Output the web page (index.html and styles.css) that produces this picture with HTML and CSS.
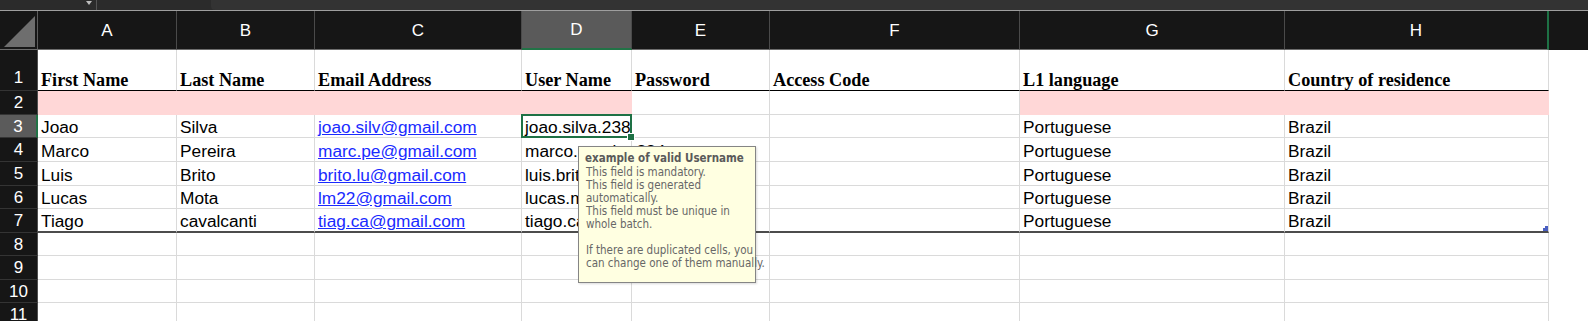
FILE: index.html
```html
<!DOCTYPE html>
<html lang="en">
<head>
    <meta charset="UTF-8">
    <title>Users sheet</title>
    <link rel="stylesheet" href="styles.css">
</head>
<body>
    <div class="topbar">
        <div class="namebox"><span class="caret"></span></div>
        <div class="formula"></div>
    </div>

    <div class="sheet">
        <!-- column letters -->
        <div class="row colhead">
            <div class="corner"><div class="tri"></div></div>
            <div class="ch">A</div>
            <div class="ch">B</div>
            <div class="ch">C</div>
            <div class="ch active">D</div>
            <div class="ch">E</div>
            <div class="ch">F</div>
            <div class="ch">G</div>
            <div class="ch last">H</div>
        </div>

        <div class="row titles">
            <div class="rh">1</div>
            <div class="cell">First Name</div>
            <div class="cell">Last Name</div>
            <div class="cell">Email Address</div>
            <div class="cell">User Name</div>
            <div class="cell">Password</div>
            <div class="cell">Access Code</div>
            <div class="cell">L1 language</div>
            <div class="cell">Country of residence</div>
        </div>

        <div class="row r2">
            <div class="rh">2</div>
            <div class="cell pink"></div>
            <div class="cell pink"></div>
            <div class="cell pink"></div>
            <div class="cell pink"></div>
            <div class="cell"></div>
            <div class="cell"></div>
            <div class="cell pink"></div>
            <div class="cell pink"></div>
        </div>

        <div class="row h23">
            <div class="rh active">3</div>
            <div class="cell">Joao</div>
            <div class="cell">Silva</div>
            <div class="cell"><a href="#">joao.silv@gmail.com</a></div>
            <div class="cell selected">joao.silva.238</div>
            <div class="cell"></div>
            <div class="cell"></div>
            <div class="cell">Portuguese</div>
            <div class="cell">Brazil</div>
        </div>

        <div class="row h24">
            <div class="rh">4</div>
            <div class="cell">Marco</div>
            <div class="cell">Pereira</div>
            <div class="cell"><a href="#">marc.pe@gmail.com</a></div>
            <div class="cell spill">marco.pereira.234</div>
            <div class="cell"></div>
            <div class="cell"></div>
            <div class="cell">Portuguese</div>
            <div class="cell">Brazil</div>
        </div>

        <div class="row h24">
            <div class="rh">5</div>
            <div class="cell">Luis</div>
            <div class="cell">Brito</div>
            <div class="cell"><a href="#">brito.lu@gmail.com</a></div>
            <div class="cell spill">luis.brito.412</div>
            <div class="cell"></div>
            <div class="cell"></div>
            <div class="cell">Portuguese</div>
            <div class="cell">Brazil</div>
        </div>

        <div class="row h23">
            <div class="rh">6</div>
            <div class="cell">Lucas</div>
            <div class="cell">Mota</div>
            <div class="cell"><a href="#">lm22@gmail.com</a></div>
            <div class="cell spill">lucas.mota.587</div>
            <div class="cell"></div>
            <div class="cell"></div>
            <div class="cell">Portuguese</div>
            <div class="cell">Brazil</div>
        </div>

        <div class="row h24 endrow">
            <div class="rh">7</div>
            <div class="cell">Tiago</div>
            <div class="cell">cavalcanti</div>
            <div class="cell"><a href="#">tiag.ca@gmail.com</a></div>
            <div class="cell spill">tiago.cavalcanti.190</div>
            <div class="cell"></div>
            <div class="cell"></div>
            <div class="cell">Portuguese</div>
            <div class="cell marker">Brazil</div>
        </div>

        <div class="row h23">
            <div class="rh">8</div>
            <div class="cell"></div><div class="cell"></div><div class="cell"></div><div class="cell"></div>
            <div class="cell"></div><div class="cell"></div><div class="cell"></div><div class="cell"></div>
        </div>
        <div class="row h24">
            <div class="rh">9</div>
            <div class="cell"></div><div class="cell"></div><div class="cell"></div><div class="cell"></div>
            <div class="cell"></div><div class="cell"></div><div class="cell"></div><div class="cell"></div>
        </div>
        <div class="row h23">
            <div class="rh">10</div>
            <div class="cell"></div><div class="cell"></div><div class="cell"></div><div class="cell"></div>
            <div class="cell"></div><div class="cell"></div><div class="cell"></div><div class="cell"></div>
        </div>
        <div class="row h24">
            <div class="rh">11</div>
            <div class="cell"></div><div class="cell"></div><div class="cell"></div><div class="cell"></div>
            <div class="cell"></div><div class="cell"></div><div class="cell"></div><div class="cell"></div>
        </div>

        <!-- cell comment on D3 -->
        <div class="tip">
            <div class="tip-title">example of valid Username</div>
            <div class="tip-body">This field is mandatory.<br>This field is generated<br>automatically.<br>This field must be unique in<br>whole batch.<br><br>If there are duplicated cells, you<br>can change one of them manually.</div>
        </div>
    </div>
</body>
</html>
```

FILE: styles.css
```css
body {
    margin: 0;
    padding: 0;
    background: #ffffff;
    font-family: 'Liberation Sans', Arial, sans-serif;
    overflow: hidden;
}

/* toolbar strip cut off at the top */
.topbar {
    height: 10px;
    background: #2b2b2b;
    border-bottom: 1px solid #9e9e9e;
    display: flex;
}

.namebox {
    width: 97px;
    border-right: 1px solid #555;
    display: flex;
    justify-content: flex-end;
    align-items: flex-start;
    padding: 1px 4px 0 0;
    box-sizing: border-box;
}

.caret {
    width: 0;
    height: 0;
    border-left: 3px solid transparent;
    border-right: 3px solid transparent;
    border-top: 4px solid #bdbdbd;
}

.formula {
    flex-grow: 1;
    margin-left: 114px;
    background: #333333;
    border-radius: 0 0 0 4px;
}

.sheet {
    position: relative;
}

.row {
    display: grid;
    grid-template-columns: 38px 139px 138px 207px 110px 138px 250px 265px 264px;
}

.h23 { height: 23px; }
.h24 { height: 24px; }

/* column letters */
.colhead {
    height: 39px;
    background: #161616;
}

.corner {
    background: #161616;
    border-right: 1px solid #5c5c5c;
    border-bottom: 1px solid #6c6c6c;
    box-sizing: border-box;
    display: flex;
    align-items: flex-end;
    justify-content: flex-end;
    padding: 0 2px 2px 0;
}

.tri {
    width: 31px;
    height: 31px;
    background: #6e6e6e;
    clip-path: polygon(100% 0, 100% 100%, 0 100%);
}

.ch {
    color: #ffffff;
    font-size: 17px;
    display: flex;
    align-items: center;
    justify-content: center;
    border-right: 1px solid #4a4a4a;
    border-bottom: 1px solid #6c6c6c;
    box-sizing: border-box;
    padding-top: 1px;
}

.ch.active {
    background: #5a5a5a;
    border-bottom: 2px solid #217346;
}

.ch.last {
    border-right: 2px solid #1e7145;
}

/* row numbers */
.rh {
    background: #161616;
    color: #ffffff;
    font-size: 17px;
    display: flex;
    align-items: center;
    justify-content: center;
    border-right: 1px solid #4f4f4f;
    border-bottom: 1px solid #343434;
    box-sizing: border-box;
    padding-top: 1px;
}

.rh.active {
    background: #5b5b5b;
    border-right: 2px solid #217346;
}

.titles .rh {
    align-items: flex-end;
    padding-bottom: 2px;
}

.cell {
    border-right: 1px solid #dadada;
    border-bottom: 1px solid #dadada;
    box-sizing: border-box;
    font-size: 17.3px;
    line-height: 20px;
    color: #000;
    padding-left: 3px;
    white-space: nowrap;
    overflow: hidden;
    display: flex;
    align-items: flex-end;
    position: relative;
}

.cell a {
    color: #1a2bff;
    text-decoration: underline;
}

.spill {
    overflow: visible;
}

/* header titles row */
.titles {
    height: 41px;
}

.titles .cell {
    font-family: 'Liberation Serif', 'Times New Roman', serif;
    font-weight: bold;
    font-size: 18.2px;
    border-bottom: 1px solid #000000;
}

.r2 {
    height: 24px;
}

.pink {
    background: #ffd7d7;
    border-right-color: #ffd7d7;
    border-bottom-color: #ffd7d7;
}

.endrow .cell {
    border-bottom: 2px solid #4c4c4c;
}

/* active cell D3 */
.selected {
    overflow: visible;
}

.selected::after {
    content: "";
    position: absolute;
    left: -1px;
    top: -1px;
    right: -1px;
    bottom: -1px;
    border: 2px solid #1e7145;
    z-index: 2;
}

.selected::before {
    content: "";
    position: absolute;
    right: -4px;
    bottom: -4px;
    width: 6px;
    height: 6px;
    background: #1e7145;
    border: 1px solid #ffffff;
    z-index: 3;
}

.marker::after {
    content: "";
    position: absolute;
    right: 0;
    bottom: 0;
    width: 5px;
    height: 5px;
    background: #4a5fc1;
    clip-path: polygon(100% 0, 100% 100%, 0 100%, 0 40%, 40% 40%, 40% 0);
}

/* comment box */
.tip {
    position: absolute;
    left: 578px;
    top: 135px;
    width: 178px;
    height: 137px;
    box-sizing: border-box;
    background: #ffffe1;
    border: 1px solid #858585;
    padding: 4px 6px 0 6px;
    white-space: nowrap;
    z-index: 5;
    box-shadow: 1px 1px 2px rgba(0, 0, 0, 0.15);
    font-family: 'DejaVu Sans Condensed', 'DejaVu Sans', sans-serif;
    font-stretch: condensed;
}

.tip-title {
    font-weight: bold;
    font-size: 11.5px;
    line-height: 15px;
    color: #5a5a5a;
}

.tip-body {
    margin: 0 0 0 1px;
    font-size: 11.5px;
    line-height: 13px;
    color: #676767;
}
```
